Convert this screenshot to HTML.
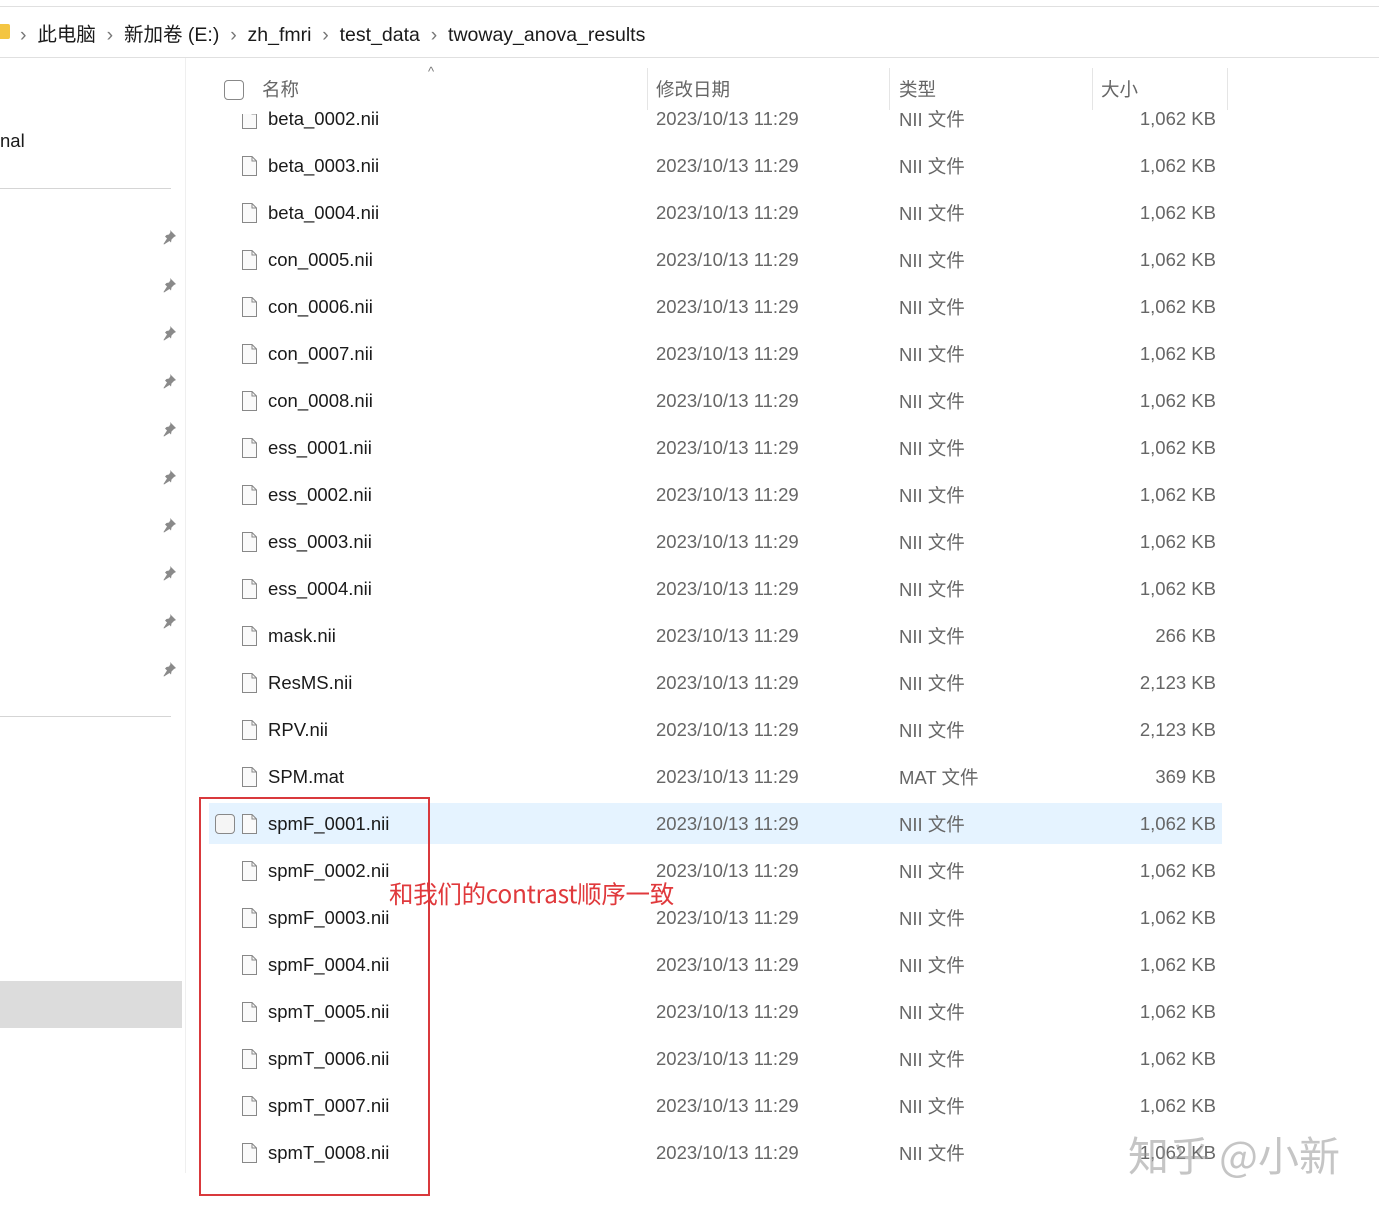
<!DOCTYPE html>
<html><head><meta charset="utf-8">
<style>
*{margin:0;padding:0;box-sizing:border-box}
body{width:1379px;height:1206px;background:#fff;position:relative;overflow:hidden;font-family:"Liberation Sans","Noto Sans CJK SC",sans-serif;}
.abs{position:absolute}
.row{position:absolute;left:0;width:1379px;height:47px}
.row span{position:absolute;top:50%;transform:translateY(-50%);white-space:nowrap;font-size:18.5px}
.nm{left:268px;color:#1a1a1a}
.dt{left:656px;color:#666}
.tp{left:899px;color:#666}
.sz{right:163px;color:#666}
.ic{position:absolute;left:241px;top:50%;transform:translateY(-50%);width:17px;height:22px}
.pin{position:absolute;left:161px;width:16px;height:16px}
.hd{position:absolute;top:76px;font-size:18.5px;color:#666}
.sep{position:absolute;top:68px;width:1px;height:42px;background:#e5e5e5}
</style></head><body>
<div class="abs" style="left:0;top:6px;width:1379px;height:1px;background:#e0e0e0"></div>
<div class="abs" style="left:0;top:57px;width:1379px;height:1px;background:#e0e0e0"></div>
<div class="abs" style="left:0;top:24px;width:10px;height:15px;background:#f4c542;border-radius:0 2px 2px 0"></div>
<div class="abs" style="left:20px;top:18px;font-size:19.5px;color:#1a1a1a;white-space:nowrap">
<span style="color:#777">›</span>&nbsp; 此电脑 &nbsp;<span style="color:#777">›</span>&nbsp; 新加卷 (E:) &nbsp;<span style="color:#777">›</span>&nbsp; zh_fmri &nbsp;<span style="color:#777">›</span>&nbsp; test_data &nbsp;<span style="color:#777">›</span>&nbsp; twoway_anova_results</div>

<!-- left pane -->
<div class="abs" style="left:0;top:130px;font-size:18.5px;color:#1a1a1a">nal</div>
<div class="abs" style="left:0;top:188px;width:171px;height:1px;background:#d5d5d5"></div>
<div class="abs" style="left:0;top:716px;width:171px;height:1px;background:#d5d5d5"></div>
<div class="abs" style="left:0;top:981px;width:182px;height:47px;background:#dcdcdc"></div>
<div class="abs" style="left:185px;top:58px;width:1px;height:1115px;background:#efefef"></div>
<div id="pins"></div>

<!-- header -->
<div class="abs" style="left:224px;top:80px;width:20px;height:20px;border:1.5px solid #888;border-radius:4px"></div>
<div class="hd" style="left:262px">名称</div>
<div class="abs" style="left:428px;top:64px;font-size:13px;color:#777">^</div>
<div class="sep" style="left:647px"></div><div class="hd" style="left:656px">修改日期</div>
<div class="sep" style="left:889px"></div><div class="hd" style="left:899px">类型</div>
<div class="sep" style="left:1092px"></div><div class="hd" style="left:1101px">大小</div>
<div class="sep" style="left:1227px"></div>

<div class="abs" style="left:209px;top:803px;width:1013px;height:41px;background:#e5f3ff"></div>
<div class="abs" style="left:215px;top:814px;width:20px;height:20px;border:1.5px solid #888;border-radius:4px;background:#f5f5f5"></div>

<div id="rows"></div>

<div class="abs" style="left:199px;top:797px;width:231px;height:399px;border:2.5px solid #d9393c"></div>
<div class="abs" style="left:389px;top:876px;font-size:24.5px;color:#e0393c;white-space:nowrap;letter-spacing:-0.3px;font-family:'Noto Sans CJK SC','Liberation Sans',sans-serif">和我们的contrast顺序一致</div>

<div class="abs" style="left:1128px;top:1123px;font-size:41px;color:rgba(150,150,150,0.55);white-space:nowrap;font-family:'Noto Sans CJK SC',sans-serif">知乎 @小新</div>

<script>
var names=["beta_0002.nii","beta_0003.nii","beta_0004.nii","con_0005.nii","con_0006.nii","con_0007.nii","con_0008.nii","ess_0001.nii","ess_0002.nii","ess_0003.nii","ess_0004.nii","mask.nii","ResMS.nii","RPV.nii","SPM.mat","spmF_0001.nii","spmF_0002.nii","spmF_0003.nii","spmF_0004.nii","spmT_0005.nii","spmT_0006.nii","spmT_0007.nii","spmT_0008.nii"];
var h="";
names.forEach(function(n,i){
 var c=119+47*i;
 var sz="1,062 KB",tp="NII 文件";
 if(n=="mask.nii")sz="266 KB";
 if(n=="ResMS.nii"||n=="RPV.nii")sz="2,123 KB";
 if(n=="SPM.mat"){sz="369 KB";tp="MAT 文件";}
 var clip=i==0?'clip-path:inset(6px 0 0 0);':'';
 h+='<div class="row" style="top:'+(c-23.5)+'px"><svg class="ic" style="'+clip+'" viewBox="0 0 17 22"><path d="M1.5 1.5H11L15.5 6V20.5H1.5Z" fill="#fafafa" stroke="#888" stroke-width="1"/><path d="M11 1.5V6H15.5" fill="none" stroke="#888" stroke-width="1"/></svg><span class="nm">'+n+'</span><span class="dt">2023/10/13 11:29</span><span class="tp">'+tp+'</span><span class="sz">'+sz+'</span></div>';
});
document.getElementById("rows").innerHTML=h;
var p="";
for(var k=0;k<10;k++){p+='<svg class="pin" style="top:'+(229+48*k)+'px" viewBox="0 0 16 16"><path d="M9 1L15 7L13 8L10.5 10.5L10 13.5L8.5 12L3 15.5L2.5 15L6 9.5L4 7.5L5.5 6L8 5.5L9.5 3Z" fill="#8a8a8a"/></svg>';}
document.getElementById("pins").innerHTML=p;
</script>
</body></html>
